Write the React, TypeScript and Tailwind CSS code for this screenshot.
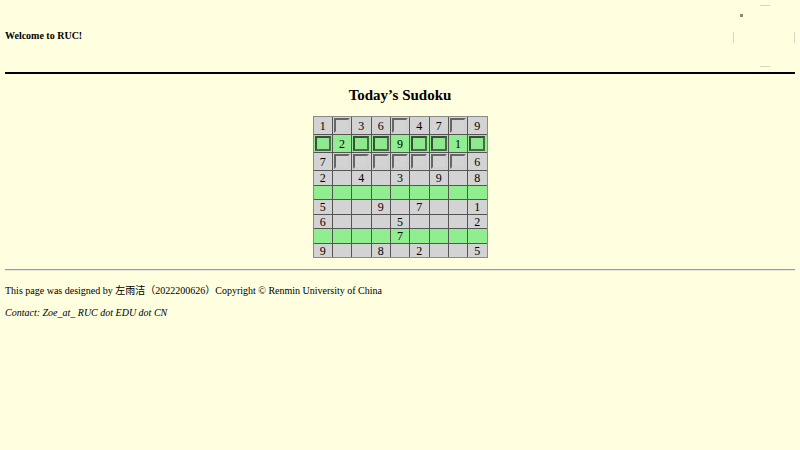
import React from "react";

type Cell = string | null | "in";

const rows: Cell[][] = [
  ["1", "in", "3", "6", "in", "4", "7", "in", "9"],
  ["in", "2", "in", "in", "9", "in", "in", "1", "in"],
  ["7", "in", "in", "in", "in", "in", "in", "in", "6"],
  ["2", null, "4", null, "3", null, "9", null, "8"],
  [null, null, null, null, null, null, null, null, null],
  ["5", null, null, "9", null, "7", null, null, "1"],
  ["6", null, null, null, "5", null, null, null, "2"],
  [null, null, null, null, "7", null, null, null, null],
  ["9", null, null, "8", null, "2", null, null, "5"],
];

const heights = ["h-[17px]", "h-[17px]", "h-[17px]", "h-[14px]", "h-[13px]", "h-[14px]", "h-[13px]", "h-[14px]", "h-[13px]"];
const green = [1, 4, 7];

function BrokenImage() {
  return (
    <svg width="62" height="62" viewBox="0 0 62 62" className="block">
      <rect x="27" y="0" width="10" height="1" fill="#d8d8c8" />
      <rect x="27" y="61" width="10" height="1" fill="#d8d8c8" />
      <rect x="0" y="27" width="1" height="11" fill="#d8d8c8" />
      <rect x="61" y="27" width="1" height="11" fill="#d8d8c8" />
      <rect x="7" y="9" width="3" height="3" fill="#8a8a7a" />
    </svg>
  );
}

export default function App() {
  return (
    <div
      className="min-h-[450px] w-[800px] bg-[#fffedf] px-[5px] pt-[5px] text-black"
      style={{ fontFamily: '"Liberation Serif", "Noto Sans CJK SC", serif' }}
    >
      <header className="flex items-center justify-between h-[62px]">
        <h5 className="text-[10px] font-bold leading-none">Welcome to RUC!</h5>
        <BrokenImage />
      </header>
      <div className="mt-[5px] h-[2px] bg-black" />
      <h3 className="mt-[10px] text-center text-[15px] font-bold leading-[22px]">
        Today’s Sudoku
      </h3>
      <div className="mt-[10px] flex justify-center">
        <div className="w-[175px] border border-[#8a8a8a] bg-[#555]">
          <div className="grid grid-cols-9 gap-px">
            {rows.map((row, r) =>
              row.map((c, i) => {
                const isGreen = green.includes(r);
                return (
                  <div
                    key={r + "-" + i}
                    className={
                      heights[r] +
                      " flex items-center justify-center text-[12px] leading-none " +
                      (isGreen ? "bg-[#90ee90]" : "bg-[#d3d3d3]")
                    }
                  >
                    {c === "in" ? (
                      <input
                        readOnly
                        aria-label="cell"
                        className={
                          "block h-[15px] w-[16px] border-2 p-0 outline-none " +
                          (isGreen
                            ? "bg-[#8ee88e] border-t-[#3a4f3a] border-l-[#3a4f3a] border-b-[#4a6a4a] border-r-[#4a6a4a]"
                            : "bg-[#d3d3d3] border-t-[#666] border-l-[#666] border-b-[#cfcfcf] border-r-[#cfcfcf]")
                        }
                      />
                    ) : (
                      c
                    )}
                  </div>
                );
              })
            )}
          </div>
        </div>
      </div>
      <div className="mt-[11px] border-t border-b border-t-[#9a9a9a] border-b-[#e8e8e0]" />
      <p className="mt-[12px] text-[10px] leading-[16px]">
        This page was designed by 左雨洁（2022200626）Copyright © Renmin University of China
      </p>
      <p className="mt-[6px] text-[10px] italic leading-[16px]">
        Contact: Zoe_at_ RUC dot EDU dot CN
      </p>
    </div>
  );
}
